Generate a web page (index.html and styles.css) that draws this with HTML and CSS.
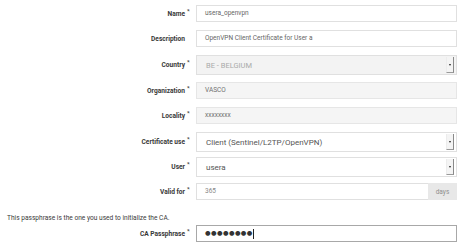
FILE: index.html
```html
<!DOCTYPE html>
<html>
<head>
<meta charset="utf-8">
<link rel="stylesheet" href="styles.css">
</head>
<body>
<div class="form">
  <div class="row r-name">
    <div class="label req">Name</div>
    <div class="field"><div class="input">usera_openvpn</div></div>
  </div>
  <div class="row r-desc">
    <div class="label">Description</div>
    <div class="field"><div class="input">OpenVPN Client Certificate for User a</div></div>
  </div>
  <div class="row r-country">
    <div class="label req">Country</div>
    <div class="field"><div class="select disabled"><span class="val light">BE - BELGIUM</span><span class="arrow"></span></div></div>
  </div>
  <div class="row r-org">
    <div class="label req">Organization</div>
    <div class="field"><div class="input disabled">VASCO</div></div>
  </div>
  <div class="row r-loc">
    <div class="label req">Locality</div>
    <div class="field"><div class="input disabled">xxxxxxxx</div></div>
  </div>
  <div class="row r-cert">
    <div class="label req">Certificate use</div>
    <div class="field"><div class="select"><span class="val">Client (Sentinel/L2TP/OpenVPN)</span><span class="arrow"></span></div></div>
  </div>
  <div class="row r-user">
    <div class="label req">User</div>
    <div class="field"><div class="select"><span class="val">usera</span><span class="arrow"></span></div></div>
  </div>
  <div class="row r-valid">
    <div class="label req">Valid for</div>
    <div class="field"><div class="group"><div class="input grow num">365</div><div class="addon">days</div></div></div>
  </div>
  <div class="help">This passphrase is the one you used to initialize the CA.</div>
  <div class="row r-pass">
    <div class="label req">CA Passphrase</div>
    <div class="field"><div class="input focus"><span class="dots">●●●●●●●●</span><span class="caret"></span></div></div>
  </div>
</div>
</body>
</html>
```

FILE: styles.css
```css
html, body {
  margin: 0;
  padding: 0;
  background: #ffffff;
}
body {
  width: 474px;
  height: 247px;
  overflow: hidden;
  font-family: Roboto, "Liberation Sans", sans-serif;
  color: #333;
}
.form {
  display: flex;
  flex-direction: column;
}
.row {
  display: grid;
  grid-template-columns: 185px 261px;
  column-gap: 11px;
  align-items: center;
}
.r-name { margin-top: 5px; }
.r-desc { margin-top: 8px; }
.r-country { margin-top: 8px; }
.r-org { margin-top: 7px; }
.r-loc { margin-top: 8px; }
.r-cert { margin-top: 8px; }
.r-user { margin-top: 5px; }
.r-valid { margin-top: 6px; }
.r-pass { margin-top: 2px; }

.label {
  position: relative;
  justify-self: end;
  font-size: 6.6px;
  font-weight: 700;
  color: #383838;
  line-height: 10px;
}
.label.req::after {
  content: "*";
  position: absolute;
  left: 100%;
  margin-left: 2px;
  top: -3px;
  font-size: 6px;
}
.input {
  box-sizing: border-box;
  height: 17px;
  border: 1px solid #e0e0e0;
  background: #fff;
  padding-left: 8px;
  font-size: 6.5px;
  line-height: 15px;
  color: #666;
  display: flex;
  align-items: center;
}
.input.disabled {
  background: #f5f5f5;
  border-color: #e6e6e6;
  color: #707070;
}
.input.focus {
  border-color: #a8a8a8;
}
.select {
  position: relative;
  box-sizing: border-box;
  height: 20px;
  border: 1px solid #e0e0e0;
  background: #fff;
  padding-left: 9px;
  font-size: 8px;
  color: #555;
  display: flex;
  align-items: center;
}
.select.disabled {
  background: #f3f3f3;
}
.val.light {
  color: #aaa;
  font-size: 7.5px;
}
.arrow {
  position: absolute;
  right: 2px;
  top: 1px;
  bottom: 1px;
  width: 6px;
  border-left: 1px solid #ececec;
  border-right: 1px solid #8a8a8a;
  border-bottom: 1px solid #9a9a9a;
  background: #f4f4f4;
}
.arrow::after {
  content: "";
  position: absolute;
  left: 2px;
  top: 50%;
  margin-top: -1px;
  border-left: 1px solid transparent;
  border-right: 1px solid transparent;
  border-top: 2px solid #222;
}
.group {
  display: flex;
  height: 17px;
}
.grow { flex: 1; }
.num { color: #888; border-right: none; }
.addon {
  width: 29px;
  background: #e8e8e8;
  color: #8f8f8f;
  font-size: 6.5px;
  display: flex;
  align-items: center;
  justify-content: center;
}
.help {
  margin-top: 13px;
  margin-left: 7px;
  font-size: 6.6px;
  line-height: 10px;
  color: #3a3a3a;
}
.dots {
  font-family: "DejaVu Sans", sans-serif;
  font-size: 6.4px;
  letter-spacing: 0.4px;
  color: #333;
}
.caret {
  display: inline-block;
  width: 1px;
  height: 10px;
  background: #222;
}
```
